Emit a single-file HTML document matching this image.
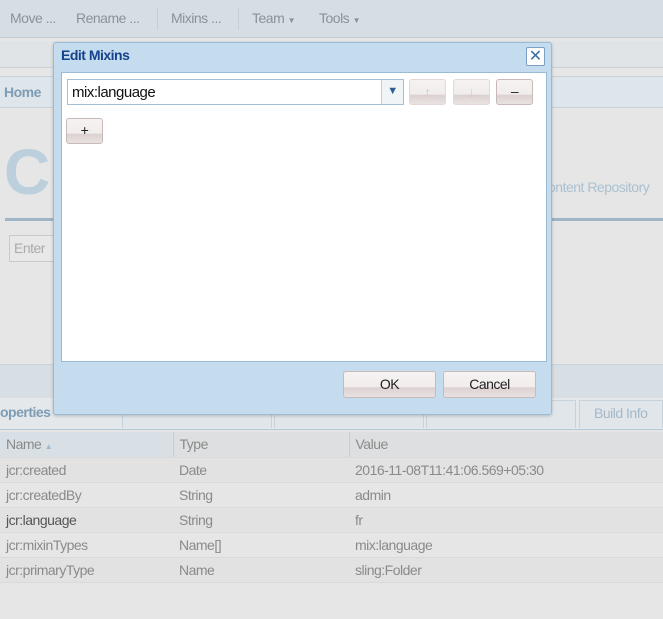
<!DOCTYPE html>
<html><head><style>
*{margin:0;padding:0;box-sizing:border-box}
body{width:663px;height:619px;overflow:hidden;background:#e6e6e6;font-family:"Liberation Sans",sans-serif;font-size:14px;letter-spacing:-0.5px;color:#8a8a8a;position:relative}
.a{position:absolute;white-space:nowrap}
.btn{position:absolute;border:1px solid #c9b9b9;border-radius:3px;background:linear-gradient(#f6f2f2 0,#f1eded 60%,#dcd0d0 62%,#e9e2e2 100%);text-align:center;color:#222}
td{height:25px;padding-left:6px;border-bottom:1px solid #dadada;white-space:nowrap}
</style></head><body>
<div class="a" style="left:0;top:0;width:663px;height:38px;background:#d6dee4;border-bottom:1px solid #c2cdd5"></div>
<div class="a" style="left:10px;top:10px;color:#8b9199">Move ...</div>
<div class="a" style="left:76px;top:10px;color:#8b9199">Rename ...</div>
<div class="a" style="left:157px;top:8px;width:1px;height:22px;background:#c5ced5"></div>
<div class="a" style="left:171px;top:10px;color:#8b9199">Mixins ...</div>
<div class="a" style="left:238px;top:8px;width:1px;height:22px;background:#c5ced5"></div>
<div class="a" style="left:252px;top:10px;color:#8b9199">Team <span style="font-size:8px">▼</span></div>
<div class="a" style="left:319px;top:10px;color:#8b9199">Tools <span style="font-size:8px">▼</span></div>
<div class="a" style="left:0;top:41px;width:663px;height:27px;background:#e1e4e6;border-bottom:1px solid #c8d2d8"></div>
<div class="a" style="left:0;top:76px;width:663px;height:32px;background:#dfe6eb;border-top:1px solid #c8d2d8;border-bottom:1px solid #c8d2d8"></div>
<div class="a" style="left:4px;top:84px;font-weight:bold;color:#7f9cb5;font-size:14px">Home</div>
<div class="a" style="left:4px;top:140px;font-size:64px;font-weight:bold;color:#bccfdc;line-height:1">C</div>
<div class="a" style="left:548px;top:179px;color:#a9c0d0;font-size:14px">ontent Repository</div>
<div class="a" style="left:5px;top:218px;width:658px;height:3px;background:#9fb4c4"></div>
<div class="a" style="left:9px;top:235px;width:50px;height:27px;border:1px solid #c9c9c9;background:#e8e8e8;padding:4px 4px;color:#aaa">Enter</div>
<div class="a" style="left:0;top:364px;width:663px;height:34px;background:#d8dfe4;border-top:1px solid #c8d2d8"></div>
<div class="a" style="left:0;top:398px;width:663px;height:32px;background:#e4e8eb;border-bottom:1px solid #b5c8d6"></div>
<div class="a" style="left:0;top:404px;color:#7f9cb5;font-weight:bold">operties</div>
<div class="a" style="left:122px;top:400px;width:150px;height:28px;border:1px solid #c6d2dc;border-bottom:none;background:#e1e6ea"></div>
<div class="a" style="left:274px;top:400px;width:150px;height:28px;border:1px solid #c6d2dc;border-bottom:none;background:#e1e6ea"></div>
<div class="a" style="left:426px;top:400px;width:150px;height:28px;border:1px solid #c6d2dc;border-bottom:none;background:#e1e6ea"></div>
<div class="a" style="left:579px;top:400px;width:84px;height:28px;border:1px solid #c6d2dc;border-bottom:none;background:#e1e6ea;padding:4px 14px;color:#a5b8c8">Build Info</div>
<table class="a" style="left:0;top:432px;width:663px;border-collapse:collapse">
<tr style="background:#dedfe0"><td style="width:173px;background:#d8e0e6;border-right:1px solid #ccc">Name <span style="font-size:8px;color:#9fb8cc">▲</span></td><td style="width:176px;border-right:1px solid #ccc">Type</td><td>Value</td></tr>
<tr style="background:#e2e2e2"><td>jcr:created</td><td>Date</td><td>2016-11-08T11:41:06.569+05:30</td></tr>
<tr style="background:#e6e6e6"><td>jcr:createdBy</td><td>String</td><td>admin</td></tr>
<tr style="background:#e2e2e2;color:#555"><td>jcr:language</td><td style="color:#8a8a8a">String</td><td style="color:#8a8a8a">fr</td></tr>
<tr style="background:#e6e6e6"><td>jcr:mixinTypes</td><td>Name[]</td><td>mix:language</td></tr>
<tr style="background:#e2e2e2"><td>jcr:primaryType</td><td>Name</td><td>sling:Folder</td></tr>
</table>
<div class="a" style="left:53px;top:42px;width:499px;height:373px;background:#c5dcee;border:1px solid #99bbd6;border-radius:3px;box-shadow:0 1px 3px rgba(0,0,0,.2)"></div>
<div class="a" style="left:61px;top:47px;font-weight:bold;color:#15428b;font-size:14px">Edit Mixins</div>
<div class="a" style="left:526px;top:47px;width:19px;height:19px;border:1px solid #7aa0c4;background:#fff;border-radius:2px;color:#3c6fa3;font-size:16px;line-height:17px;text-align:center;letter-spacing:0">✕</div>
<div class="a" style="left:61px;top:72px;width:486px;height:290px;background:#fff;border:1px solid #99bbd6"></div>
<div class="a" style="left:67px;top:79px;width:337px;height:26px;border:1px solid #a6bfd4;background:#fff;padding:4px 4px;color:#111;font-size:15px">mix:language</div>
<div class="a" style="left:381px;top:80px;width:22px;height:24px;border-left:1px solid #ccc;background:#f1f4f7;color:#2a5e91;font-size:11px;text-align:center;line-height:22px">▼</div>
<div class="btn" style="left:409px;top:79px;width:37px;height:26px;border-color:#e3d8d8;color:#ccc;line-height:24px">↑</div>
<div class="btn" style="left:453px;top:79px;width:37px;height:26px;border-color:#e3d8d8;color:#ccc;line-height:24px">↓</div>
<div class="btn" style="left:496px;top:79px;width:37px;height:26px;line-height:22px">–</div>
<div class="btn" style="left:66px;top:118px;width:37px;height:26px;line-height:22px">+</div>
<div class="btn" style="left:343px;top:371px;width:93px;height:27px;line-height:25px">OK</div>
<div class="btn" style="left:443px;top:371px;width:93px;height:27px;line-height:25px">Cancel</div>
</body></html>
